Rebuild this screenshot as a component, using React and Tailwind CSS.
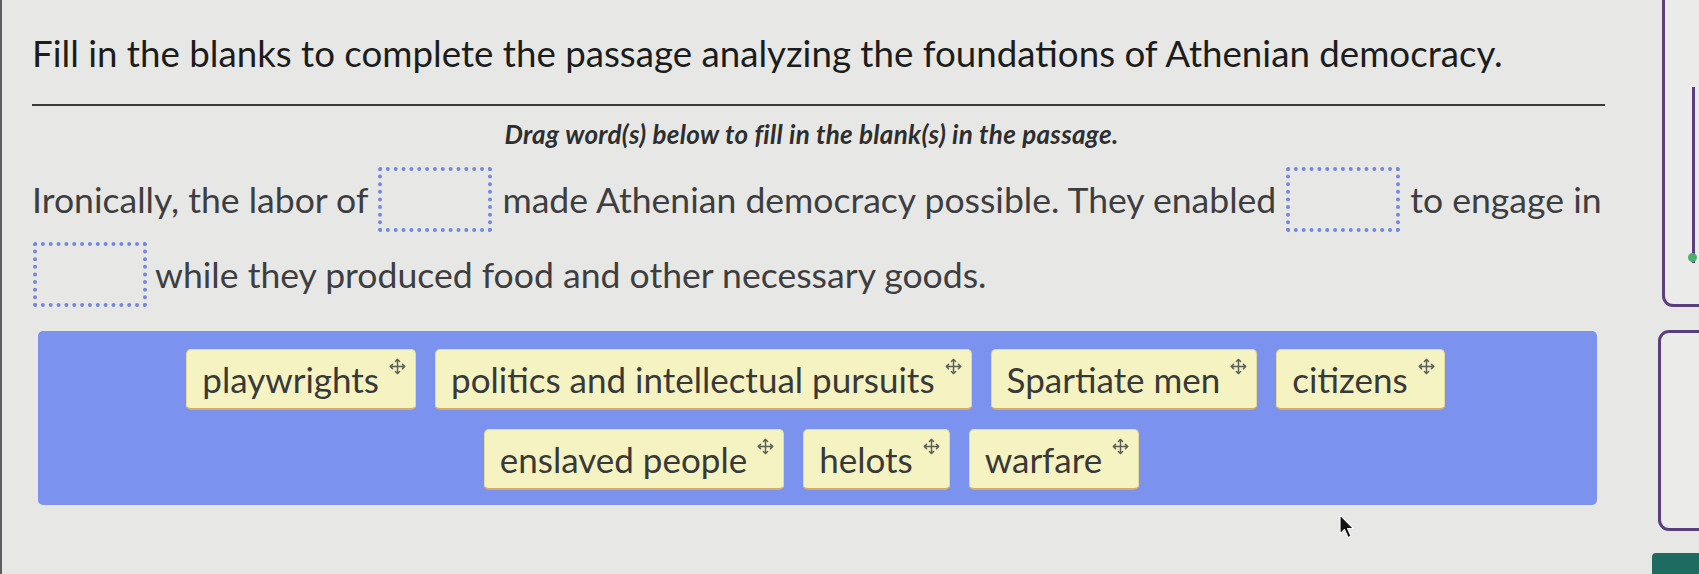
import React from "react";
import { Move } from "lucide-react";

function Blank() {
  return (
    <span className="inline-block w-[114px] h-[65px] shrink-0 rounded-[3px] border-[4px] border-dotted border-[#7387de]" />
  );
}

function Chip({ label }) {
  return (
    <div className="flex h-[61px] items-start rounded-[5px] border border-[#e6d99a] border-b-2 border-b-[#d6ab68] bg-[#f5f3c1] pl-[15px] pr-[9px]">
      <span className="text-[35px] leading-[59px] text-[#393939] whitespace-nowrap">{label}</span>
      <Move className="ml-[10px] mt-[8px] h-[17px] w-[17px] text-[#5c5c58]" strokeWidth={2} />
    </div>
  );
}

export default function App() {
  return (
    <div className="relative flex h-[574px] w-[1699px] overflow-hidden border-l-2 border-[#5e5e5e] bg-[#e7e8e6] font-['Lato',sans-serif]">
      <main className="flex w-[1650px] shrink-0 flex-col pl-[30px] pr-[47px]">
        <h1 className="pt-[31px] text-[36.7px] font-normal leading-[44px] text-[#1c1c1c] whitespace-nowrap">
          Fill in the blanks to complete the passage analyzing the foundations of Athenian democracy.
        </h1>
        <div className="mt-[29px] h-[2px] bg-[#3a3a3c]" />
        <p className="mt-[12px] pr-[14px] text-center text-[26px] font-bold italic leading-[32px] tracking-[0.3px] text-[#2e2e2e]">
          Drag word(s) below to fill in the blank(s) in the passage.
        </p>
        <div className="mt-[17px] flex flex-col gap-[10px] text-[35.6px] leading-[44px] text-[#3e3e41]">
          <div className="flex h-[65px] items-center gap-[10px] whitespace-nowrap">
            <span>Ironically, the labor of</span>
            <Blank />
            <span>made Athenian democracy possible. They enabled</span>
            <Blank />
            <span>to engage in</span>
          </div>
          <div className="flex h-[65px] items-center gap-[8px] whitespace-nowrap pl-[1px]">
            <Blank />
            <span>while they produced food and other necessary goods.</span>
          </div>
        </div>
        <section className="ml-[6px] mr-[8px] mt-[24px] flex h-[174px] flex-col items-center gap-[19px] rounded-[5px] bg-[#7b93ee] pt-[18px]">
          <div className="flex gap-[19px] pr-[4px]">
            <Chip label="playwrights" />
            <Chip label="politics and intellectual pursuits" />
            <Chip label="Spartiate men" />
            <Chip label="citizens" />
          </div>
          <div className="flex gap-[19px] pr-[12px]">
            <Chip label="enslaved people" />
            <Chip label="helots" />
            <Chip label="warfare" />
          </div>
        </section>
      </main>
      <aside className="flex flex-1 flex-col">
        <div className="relative ml-[10px] mt-[-12px] h-[319px] w-[60px] shrink-0 rounded-[11px] border-[3px] border-[#5a3e7d] bg-[#ebebea]">
          <div className="ml-[27px] mt-[96px] h-[176px] w-[3px] bg-[#5a3e7d]" />
          <span className="absolute left-[23px] top-[262px] h-[9px] w-[9px] rounded-full bg-[#48b06a]" />
        </div>
        <div className="ml-[6px] mt-[23px] h-[201px] w-[60px] shrink-0 rounded-[11px] border-[3px] border-[#5a3e7d] bg-[#ebebea]" />
        <div className="ml-0 mt-[22px] h-[40px] w-[60px] shrink-0 rounded-t-[4px] bg-[#1e6b62]" />
      </aside>
      <svg className="absolute left-[1337px] top-[514px]" width="16" height="26" viewBox="0 0 16 26">
        <path d="M1 1 L1 20 L5.5 15.5 L9 23.5 L12 22.2 L8.6 14.5 L14.5 14.5 Z" fill="#111" stroke="#f4f4f4" strokeWidth="1.2" strokeLinejoin="round" />
      </svg>
    </div>
  );
}
